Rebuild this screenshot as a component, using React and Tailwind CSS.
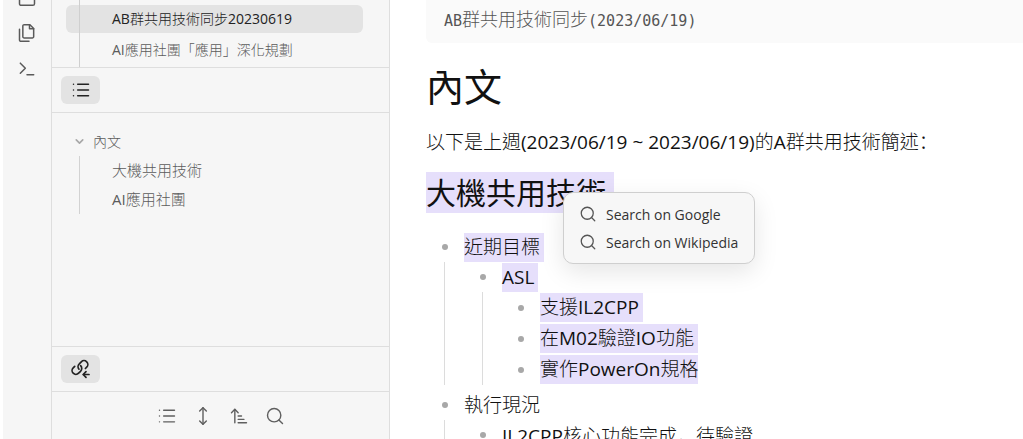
import { List, MoveVertical, ArrowUpNarrowWide, Search, ChevronDown } from "lucide-react";

function FilesIcon() {
  return (
    <svg width="20" height="20" viewBox="0 0 24 24" fill="none" stroke="currentColor" strokeWidth="1.8" strokeLinecap="round" strokeLinejoin="round">
      <path d="M15.5 2H8.6c-.4 0-.8.2-1.1.5-.3.3-.5.7-.5 1.1v12.8c0 .4.2.8.5 1.1.3.3.7.5 1.1.5h9.8c.4 0 .8-.2 1.1-.5.3-.3.5-.7.5-1.1V6.5L15.5 2z" />
      <path d="M3 7.6v12.8c0 .4.2.8.5 1.1.3.3.7.5 1.1.5h9.8" />
      <path d="M15 2v5h5" />
    </svg>
  );
}

function TerminalIcon() {
  return (
    <svg width="20" height="20" viewBox="0 0 24 24" fill="none" stroke="currentColor" strokeWidth="1.8" strokeLinecap="round" strokeLinejoin="round">
      <path d="M4 17l6-6-6-6" />
      <path d="M12 19h8" />
    </svg>
  );
}

function CalendarIcon() {
  return (
    <svg width="20" height="20" viewBox="0 0 24 24" fill="none" stroke="currentColor" strokeWidth="1.8" strokeLinecap="round" strokeLinejoin="round">
      <rect x="3" y="4" width="18" height="18" rx="2" />
      <path d="M16 2v4M8 2v4M3 10h18" />
    </svg>
  );
}

function BacklinkIcon() {
  return (
    <svg width="20" height="20" viewBox="0 0 20 20" fill="none" stroke="currentColor" strokeWidth="1.7" strokeLinecap="round" strokeLinejoin="round">
      <path d="M8 10.2a3.9 3.9 0 0 1 .3-5.4l2-2a3.8 3.8 0 0 1 5.4 5.4l-1.3 1.3" />
      <path d="M9.6 6.7a3.9 3.9 0 0 1-.1 5.6l-1.9 1.9a3.8 3.8 0 0 1-5.4-5.4l1.5-1.5" />
      <path d="M18 15.5h-5.6" />
      <path d="M15 12.7l-2.8 2.8 2.8 2.8" />
    </svg>
  );
}

function TabBar({ label, children }) {
  return (
    <div className="flex h-[45px] shrink-0 items-center border-t border-[#dedede] px-[9px]">
      <button aria-label={label} className="flex h-7 w-[39px] items-center justify-center rounded-md bg-[#e3e3e3] text-[#222222]">
        {children}
      </button>
    </div>
  );
}

function Row({ children, selected, trailing, deep }) {
  return (
    <div className={deep ? "flex h-[31px] items-center" : "flex h-[30px] items-center"}>
      <span className="mx-4 size-[6px] shrink-0 rounded-full bg-[#a8a8a8]" />
      <span className={selected ? (trailing ? "bg-[#e6dffb] pr-1 leading-[29px]" : "bg-[#e6dffb] leading-[29px]") : "leading-[29px]"}>
        {children}
      </span>
    </div>
  );
}

function Nested({ children }) {
  return <ul className="ml-[18px] border-l border-[#dcdcdc] pl-[19px]">{children}</ul>;
}

function Punct({ children }) {
  return <span lang="zh-Hans" className="font-['Noto_Sans_CJK_SC_Light','Noto_Sans_CJK_SC',sans-serif]">{children}</span>;
}

function MenuButton({ children }) {
  return (
    <button className="flex h-7 w-full items-center gap-[9px] px-[10px]">
      <Search size={18} strokeWidth={1.7} className="text-[#555555]" />
      {children}
    </button>
  );
}

export default function App() {
  return (
    <div className="flex h-screen overflow-hidden bg-white pl-[3px] font-['Open_Sans','Noto_Sans_CJK_TC_Light','Noto_Sans_CJK_TC',sans-serif] text-[#111111]">
      <nav className="flex w-[49px] shrink-0 flex-col items-center gap-4 border-r border-[#dedede] bg-[#f6f6f6] text-[#5a5a5a]">
        <button aria-label="Daily note" className="-mt-[13px]"><CalendarIcon /></button>
        <button aria-label="Templates"><FilesIcon /></button>
        <button aria-label="Command palette"><TerminalIcon /></button>
      </nav>

      <aside className="relative flex w-[338px] shrink-0 flex-col border-r border-[#dedede] bg-[#f6f6f6] text-[14px] text-[#5c5c5c]">
        <div className="flex h-[67px] shrink-0 pl-[14px] pr-[26px]">
          <ul className="flex w-full flex-col gap-[3px] pt-[5px]">
            <li><a href="#ab" className="flex h-7 items-center rounded-md bg-[#e3e3e3] pb-[2px] pl-[46px] text-[#222222]">AB群共用技術同步20230619</a></li>
            <li><a href="#ai" className="flex h-7 items-center pb-[2px] pl-[46px]">AI應用社團「應用」深化規劃</a></li>
          </ul>
          <div className="absolute left-[27px] top-0 h-[67px] w-px bg-[#cfcfcf]" />
        </div>
        <TabBar label="Outline"><List size={20} strokeWidth={1.8} /></TabBar>
        <div className="min-h-0 flex-1 border-t border-[#dedede] pl-[21px] pt-[14px] text-[15px]">
          <button className="flex h-[29px] items-center gap-[7px] text-[14px]">
            <ChevronDown size={13} strokeWidth={3} className="text-[#a8a8a8]" />
            內文
          </button>
          <ul className="ml-[6px] border-l border-[#d2d2d2] pl-8">
            <li><a href="#tech" className="flex h-[29px] items-center">大機共用技術</a></li>
            <li><a href="#club" className="flex h-[29px] items-center">AI應用社團</a></li>
          </ul>
        </div>
        <TabBar label="Backlinks"><BacklinkIcon /></TabBar>
        <div className="flex h-12 shrink-0 items-center justify-center gap-4 border-t border-[#dedede] text-[#5f5f5f]">
          <button aria-label="Collapse results"><List size={20} strokeWidth={1.7} /></button>
          <button aria-label="Show more context"><MoveVertical size={20} strokeWidth={1.7} /></button>
          <button aria-label="Change sort order"><ArrowUpNarrowWide size={20} strokeWidth={1.7} /></button>
          <button aria-label="Search"><Search size={20} strokeWidth={1.7} /></button>
        </div>
      </aside>

      <main className="relative min-w-0 flex-1 overflow-hidden pl-9 text-[19px]">
        <pre className="flex h-[43px] items-center rounded-bl-md bg-[#fafafa] pb-1 pl-[18px] text-[15px] text-[#555555]">
          <code className="font-['DejaVu_Sans_Mono','Noto_Sans_CJK_TC_Light','Noto_Sans_CJK_TC',monospace]">AB<span className="text-[18px]">群共用技術同步</span>(2023/06/19)</code>
        </pre>
        <h1 className="mt-4 font-['Open_Sans','Noto_Sans_CJK_TC',sans-serif] text-[38px] leading-[54px]">內文</h1>
        <p className="mt-[14px] leading-[28px]">以下是上週(2023/06/19 ~ 2023/06/19)的A群共用技術簡述<Punct>：</Punct></p>
        <h2 className="mt-4 flex font-['Open_Sans','Noto_Sans_CJK_TC',sans-serif] text-[30px] leading-[41px]"><span className="bg-[#e6dffb] pr-2">大機共用技術</span></h2>
        <ul className="mt-[19px] flex flex-col gap-[5px]">
          <li>
            <Row selected trailing>近期目標</Row>
            <Nested>
              <li>
                <Row selected trailing>ASL</Row>
                <Nested>
                  <li><Row deep selected trailing>支援IL2CPP</Row></li>
                  <li><Row deep selected trailing>在M02驗證IO功能</Row></li>
                  <li><Row deep selected>實作PowerOn規格</Row></li>
                </Nested>
              </li>
            </Nested>
          </li>
          <li>
            <Row>執行現況</Row>
            <Nested>
              <li><Row>IL2CPP核心功能完成<Punct>，</Punct>待驗證</Row></li>
            </Nested>
          </li>
        </ul>

        <div className="absolute left-[173px] top-[192px] w-[192px] rounded-[10px] border border-[#cfcfcf] bg-[#f7f7f7] px-[5px] py-[7px] text-[14px] text-[#333333] shadow-[0_8px_24px_rgba(0,0,0,0.10)]">
          <MenuButton>Search on Google</MenuButton>
          <MenuButton>Search on Wikipedia</MenuButton>
        </div>
      </main>
    </div>
  );
}
